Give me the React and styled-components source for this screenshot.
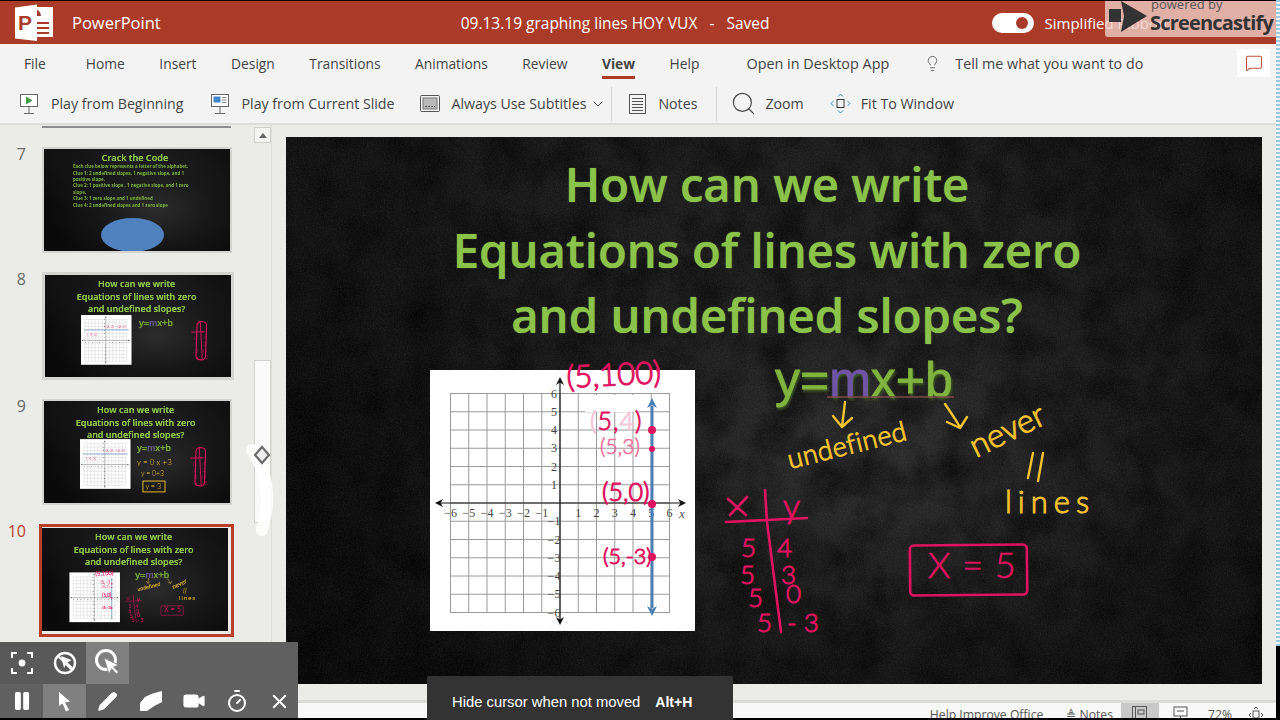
import React from "react";
import styled, { createGlobalStyle } from "styled-components";
import { ChevronDown, Lightbulb, MessageSquare, Search, X, Pause, Video, Pencil, Timer } from "lucide-react";

const RED = "#ab3b29";
const PINK = "#e0135f";
const YELLOW = "#f3c22f";
const GREEN = "#8bc34a";

const GlobalStyle = createGlobalStyle`
  html, body { margin: 0; padding: 0; background: #000; }
  * { box-sizing: border-box; }
  body { font-family: "Open Sans", "Liberation Sans", sans-serif; }
`;

const Page = styled.div`
  position: relative;
  width: 1280px;
  height: 720px;
  overflow: hidden;
  display: flex;
  flex-direction: column;
  padding: 0 4px 2px 0;
  background:
    linear-gradient(#000, #000) 0 646px / 100% 100% no-repeat,
    repeating-linear-gradient(#9cc8e2 0 2px, #eef6fa 2px 4px);
`;

/* title bar */
const TitleBar = styled.header`
  height: 44px;
  flex: none;
  position: relative;
  display: flex;
  align-items: center;
  background: ${RED};
  border-top: 1px solid #000;
  color: #fff;
  padding-left: 14px;
`;
const AppName = styled.span`
  font-size: 16.5px;
  margin-left: 18px;
`;
const DocTitle = styled.span`
  font-size: 15.5px;
  margin-left: 300px;
  white-space: pre;
`;
const Toggle = styled.span`
  width: 42px;
  height: 20px;
  border-radius: 10px;
  background: #fff;
  margin-left: 222px;
  display: flex;
  align-items: center;
  justify-content: flex-end;
  padding-right: 6px;
  &::after {
    content: "";
    width: 12px;
    height: 12px;
    border-radius: 50%;
    background: ${RED};
  }
`;
const RibbonSwitch = styled.span`
  font-size: 15px;
  margin-left: 11px;
  white-space: nowrap;
`;
const Watermark = styled.div`
  position: absolute;
  top: 0;
  left: 1105px;
  right: 0;
  height: 36px;
  background: rgba(238, 205, 197, 0.8);
  border-bottom-left-radius: 3px;
  overflow: hidden;
  color: #333;
`;
const PoweredBy = styled.span`
  position: absolute;
  left: 46px;
  top: -6px;
  font-size: 13px;
  color: #555;
`;
const CastName = styled.span`
  position: absolute;
  left: 45px;
  top: 8px;
  font-size: 20px;
  font-weight: 700;
  letter-spacing: -0.8px;
  color: #333;
`;
const CastLogo = styled.svg`
  position: absolute;
  left: 4px;
  top: 0;
`;

/* ribbon */
const Ribbon = styled.div`
  flex: none;
  height: 81px;
  background: #f3f3f3;
  border-bottom: 2px solid #dcdcd8;
  color: #444;
  font-size: 14.2px;
`;
const TabRow = styled.nav`
  height: 40px;
  display: flex;
  align-items: center;
  padding: 0 0 2px 24px;
  position: relative;
  font-size: 13.8px;
`;
const Tab = styled.span`
  position: relative;
  margin-right: ${(p) => p.$gap || 34.5}px;
  font-size: ${(p) => p.$size || 13.8}px;
  font-weight: ${(p) => (p.$active ? 700 : 400)};
  white-space: nowrap;
  ${(p) =>
    p.$active &&
    `&::after {
      content: "";
      position: absolute;
      left: 0;
      right: 0;
      bottom: -6px;
      height: 3px;
      background: ${RED};
    }`}
`;
const CommentBtn = styled.button`
  position: absolute;
  right: 6px;
  top: 5px;
  width: 33px;
  height: 28px;
  padding: 0;
  border: none;
  background: #fff;
  display: flex;
  align-items: center;
  justify-content: center;
  color: #c0503c;
`;
const ToolRow = styled.div`
  height: 39px;
  display: flex;
  align-items: center;
  padding-left: 19px;
`;
const Tool = styled.span`
  display: flex;
  align-items: center;
  gap: ${(p) => p.$iconGap || 12}px;
  margin-right: ${(p) => p.$gap ?? 26}px;
  white-space: nowrap;
`;
const TellMe = styled(Tool)`
  font-size: 14.3px;
`;
const TightChevron = styled(ChevronDown)`
  margin-left: -7px;
`;
const ToolDivider = styled.span`
  width: 1px;
  height: 34px;
  background: #d2d2d2;
  margin-right: ${(p) => p.$gap || 17}px;
`;

/* workspace */
const Workspace = styled.main`
  flex: 1;
  min-height: 0;
  display: flex;
  background: #ebebe7;
`;
const Sidebar = styled.aside`
  width: 272px;
  flex: none;
  display: flex;
  border-right: 1px solid #dededa;
`;
const ThumbList = styled.div`
  width: 254px;
  display: flex;
  flex-direction: column;
  gap: 19px;
  padding-top: 1px;
`;
const PrevEdge = styled.div`
  width: 189px;
  height: 2px;
  margin-left: 42px;
  background: #8c8c8c;
`;
const ThumbRow = styled.div`
  display: flex;
  align-items: flex-start;
`;
const ThumbNumber = styled.span`
  width: 26px;
  text-align: right;
  font-size: 16px;
  line-height: 14px;
  margin-right: ${(p) => (p.$active ? 13 : 16)}px;
  color: ${(p) => (p.$active ? "#b8402b" : "#6a6a6a")};
`;
const ThumbFrame = styled.div`
  border: ${(p) => (p.$active ? `3px solid #b93f2a` : `${p.$edge || 2}px solid #d3d3cf`)};
  padding: ${(p) => (p.$active ? "1px 3px 3px 0" : 0)};
  background: #ebebe7;
`;
const ThumbWindow = styled.div`
  width: 186px;
  height: ${(p) => p.$h || 102}px;
  overflow: hidden;
  background: #000;
`;
const ScrollBar = styled.div`
  width: 17px;
  display: flex;
  flex-direction: column;
  padding-top: 2px;
`;
const ScrollUp = styled.div`
  height: 16px;
  border: 1px solid #cfcfcb;
  background: #f4f4f2;
  display: flex;
  align-items: center;
  justify-content: center;
  &::after {
    content: "";
    border: 4px solid transparent;
    border-top: 0;
    border-bottom: 5px solid #666;
  }
`;
const ScrollThumb = styled.div`
  height: 163px;
  margin-top: 217px;
  background: #fafafa;
  border: 1px solid #d2d2ce;
`;
const Stage = styled.section`
  flex: 1;
  padding: 12px 0 0 14px;
`;

/* slide, drawn at full size and scaled down for the thumbnails */
const SlideCanvas = styled.div`
  position: relative;
  width: 976px;
  height: 547px;
  overflow: hidden;
  flex: none;
  transform-origin: 0 0;
  transform: scale(${(p) => p.$scale || 1});
  background:
    radial-gradient(ellipse 560px 340px at 60% 58%, #2c2c2c, rgba(30, 30, 30, 0.6) 55%, transparent 100%),
    radial-gradient(ellipse 700px 300px at 50% 10%, #1e1e1e, transparent 100%),
    #0a0a0a;
`;
const Grain = styled.svg`
  position: absolute;
  inset: 0;
`;
const SlideTitle = styled.div`
  position: relative;
  padding-top: 14px;
  margin-left: -14px;
  text-align: center;
  font-size: 47.3px;
  line-height: 65.5px;
  font-weight: 600;
  color: ${GREEN};
  text-shadow: 0 0 1px ${GREEN};
`;
const CrackTitle = styled(SlideTitle)`
  font-size: 48px;
  padding-top: 14px;
  margin-left: 0;
  line-height: 60px;
  text-indent: -22px;
`;
const CrackBody = styled.div`
  position: relative;
  margin: 0 0 0 152px;
  width: 680px;
  font-size: 23.5px;
  line-height: 34px;
  font-weight: 700;
  color: #7cb53f;
`;
const CrackShape = styled.div`
  position: absolute;
  left: 299px;
  top: 362px;
  width: 331px;
  height: 178px;
  border-radius: 50%;
  background: #4f81bd;
`;
const ChartCard = styled.svg`
  position: absolute;
  left: ${(p) => p.$left}px;
  top: ${(p) => p.$top}px;
  background: #fff;
  overflow: visible;
`;
const InkLayer = styled.svg`
  position: absolute;
  inset: 0;
  overflow: visible;
`;
const InkText = styled.text`
  font-family: "Lato", "Open Sans", sans-serif;
  font-weight: 300;
`;
const FormulaText = styled.text`
  font-family: "Liberation Sans", sans-serif;
  font-size: 50px;
  fill: #80b33f;
  stroke: #80b33f;
  stroke-width: 0.8px;
  filter: drop-shadow(1px 2px 1px #3f5a22);
`;
const AxisLabel = styled.text`
  font-family: "Liberation Serif", serif;
  font-size: 12px;
  fill: #444;
  text-anchor: middle;
`;

/* recorder overlay */
const Recorder = styled.div`
  position: absolute;
  left: 0;
  top: 642px;
  width: 298px;
  height: 76px;
  background: #606060;
  display: grid;
  grid-template-columns: repeat(7, 43px);
  grid-template-rows: 42px 34px;
`;
const RecCell = styled.span`
  display: flex;
  align-items: center;
  justify-content: center;
  color: #fff;
  background: ${(p) => (p.$on ? "#808080" : p.$dim ? "#595959" : "transparent")};
`;
const RecTooltip = styled.div`
  position: absolute;
  left: 427px;
  top: 676px;
  width: 306px;
  height: 44px;
  background: #333;
  border-radius: 2px 2px 0 0;
  color: #fff;
  font-family: "Liberation Sans", sans-serif;
  font-size: 14.8px;
  display: flex;
  align-items: center;
  padding: 7px 0 0 25px;
  white-space: nowrap;
`;
const Shortcut = styled.span`
  margin-left: 15px;
  font-weight: 700;
  font-size: 14px;
`;
const CursorTrail = styled.svg`
  position: absolute;
  left: 240px;
  top: 440px;
`;

/* status bar */
const StatusBar = styled.footer`
  flex: none;
  height: 18px;
  overflow: hidden;
  display: flex;
  justify-content: flex-end;
  align-items: stretch;
  background: #f8f8f8;
  border-top: 3px solid #dadad6;
  color: #555;
  font-size: 12.2px;
  padding-right: 12px;
  position: relative;
  margin-top: -2px;
`;
const StatusItem = styled.span`
  display: flex;
  align-items: flex-start;
  gap: 6px;
  padding-top: 3px;
  margin-right: ${(p) => p.$gap || 0}px;
  white-space: nowrap;
  line-height: 17px;
  ${(p) => p.$wide && `width: 38px; justify-content: center; background: #c9c9c9;`}
`;

const range = [-6, -5, -4, -3, -2, -1, 0, 1, 2, 3, 4, 5, 6];
const CELL = 18.25;
const ox = 130;
const oy = 133;

const ArrowHead = ({ x, y, dir, fill = "#111", s = 6 }) => {
  const pts = {
    l: `${x},${y} ${x + s * 2},${y - s} ${x + s * 1.4},${y} ${x + s * 2},${y + s}`,
    r: `${x},${y} ${x - s * 2},${y - s} ${x - s * 1.4},${y} ${x - s * 2},${y + s}`,
    u: `${x},${y} ${x - s},${y + s * 2} ${x},${y + s * 1.4} ${x + s},${y + s * 2}`,
    d: `${x},${y} ${x - s},${y - s * 2} ${x},${y - s * 1.4} ${x + s},${y - s * 2}`,
  };
  return <polygon points={pts[dir]} fill={fill} />;
};

// the coordinate grid pasted on the slides, line says which graph is on it
const Chart = ({ left, top, line }) => (
  <ChartCard $left={left} $top={top} width="265" height="261" viewBox="0 0 265 261">
    {range.map((n) => (
      <g key={n} stroke="#9a9a9a" strokeWidth="1">
        <line x1={ox + n * CELL} x2={ox + n * CELL} y1={oy - 6 * CELL} y2={oy + 6 * CELL} />
        <line y1={oy + n * CELL} y2={oy + n * CELL} x1={ox - 6 * CELL} x2={ox + 6 * CELL} />
      </g>
    ))}
    <line x1="10" x2="252" y1={oy} y2={oy} stroke="#111" strokeWidth="1.2" />
    <line x1={ox} x2={ox} y1="10" y2="252" stroke="#111" strokeWidth="1.2" />
    <ArrowHead x={5} y={oy} dir="l" s={4} />
    <ArrowHead x={256} y={oy} dir="r" s={4} />
    <ArrowHead x={ox} y={7} dir="u" s={4} />
    <ArrowHead x={ox} y={255} dir="d" s={4} />
    {range
      .filter((n) => n !== 0)
      .map((n) => (
        <g key={n}>
          <AxisLabel x={ox + n * CELL} y={oy + 14}>
            {n < 0 ? `\u2212${-n}` : n}
          </AxisLabel>
          <AxisLabel x={ox - 6} y={oy - n * CELL + 4}>
            {n < 0 ? `\u2212${-n}` : n}
          </AxisLabel>
        </g>
      ))}
    <AxisLabel x={252} y={oy + 15} fontStyle="italic">
      x
    </AxisLabel>
    {line === "vertical" && (
      <g>
        <line x1="222" x2="222" y1="36" y2="238" stroke="#4a7fb5" strokeWidth="3" />
        <ArrowHead x={222} y={28} dir="u" fill="#4a7fb5" s={5} />
        <ArrowHead x={222} y={246} dir="d" fill="#4a7fb5" s={5} />
        {[[60, 4], [79, 3], [134, 4], [187, 4]].map(([y, r]) => (
          <circle key={y} cx="222" cy={y} r={r} fill={PINK} />
        ))}
        <rect x="155" y="25" width="50" height="17" fill="#fff" />
        <InkText x="137" y="18" fontSize="31" fill={PINK} stroke={PINK} strokeWidth="1.1" transform="rotate(-3 137 18)">
          (5,100)
        </InkText>
        <circle cx="228" cy="0" r="2" fill={PINK} />
        <InkText x="160" y="60" fontSize="25" fill={PINK} stroke={PINK} strokeWidth="0.9" letterSpacing="1">
          <tspan fill="#f6c6d8" stroke="#f6c6d8">(</tspan>5,<tspan fill="#f6c6d8" stroke="#f6c6d8">4</tspan>)
        </InkText>
        <InkText x="170" y="84" fontSize="21" fill="#ee6f9c" stroke="#ee6f9c" strokeWidth="0.6">
          (5,3)
        </InkText>
        <InkText x="172" y="131" fontSize="25" fill={PINK} stroke={PINK} strokeWidth="1.1">
          (5,0)
        </InkText>
        <InkText x="173" y="194" fontSize="21.5" fill={PINK} stroke={PINK} strokeWidth="1">
          (5,-3)
        </InkText>
      </g>
    )}
    {line === "horizontal" && (
      <g>
        <line x1="14" x2="250" y1="78" y2="78" stroke="#4a7fb5" strokeWidth="3" />
        <InkText x="120" y="66" fontSize="24" fill={PINK}>(-2,3)</InkText>
        <InkText x="190" y="66" fontSize="24" fill={PINK}>(2,3)</InkText>
        <InkText x="30" y="108" fontSize="24" fill={PINK}>(-4,3)</InkText>
      </g>
    )}
  </ChartCard>
);

const Formula = ({ x, y }) => (
  <FormulaText x={x} y={y}>
    y=<tspan fill="#6f55a5" stroke="#6f55a5">m</tspan>x+b
  </FormulaText>
);

const Pen = ({ d, color, w = 2.4 }) => (
  <path d={d} fill="none" stroke={color} strokeWidth={w} strokeLinecap="round" strokeLinejoin="round" />
);

const PinkTable = () => (
  <g>
    <rect x="795" y="245" width="50" height="200" rx="20" fill="none" stroke={PINK} strokeWidth="6" transform="rotate(2 820 345)" />
    <Pen d="M770 300 L835 298 M815 250 L825 440" color={PINK} w="5" />
    {["4", "3", "0", "-3"].map((t, i) => (
      <InkText key={t} x="830" y={340 + i * 34} fontSize="30" fill={PINK}>
        {t}
      </InkText>
    ))}
    {[0, 1, 2, 3].map((i) => (
      <InkText key={i} x={780 + i * 4} y={340 + i * 34} fontSize="30" fill={PINK}>
        {i === 3 ? "x" : i}
      </InkText>
    ))}
  </g>
);

const MainInk = () => (
  <InkLayer width="976" height="547" viewBox="0 0 976 547">
    <Formula x={489} y={260} />
    <line x1="541" x2="668" y1="260" y2="260" stroke="#7d4a4a" strokeWidth="1.5" />
    <Pen d="M559 265 L556 290 M547 279 L556 290 L566 281" color={YELLOW} />
    <Pen d="M659 267 Q668 280 674 290 M661 285 L674 291 L681 280" color={YELLOW} />
    <InkText x="504" y="332" fontSize="27" letterSpacing="0.5" fill={YELLOW} stroke={YELLOW} strokeWidth="1" transform="rotate(-14 504 332)">
      undefined
    </InkText>
    <InkText x="690" y="321" fontSize="33" fill={YELLOW} stroke={YELLOW} strokeWidth="1" transform="rotate(-26 690 321)">
      never
    </InkText>
    <Pen d="M742 341 L747 316 M752 344 L757 316" color={YELLOW} />
    <InkText x="719" y="376" fontSize="31" letterSpacing="6" fill={YELLOW} stroke={YELLOW} strokeWidth="1">
      lines
    </InkText>
    {/* x / y table */}
    <Pen d="M461 360 L444 378 M442 362 L460 378" color={PINK} w="2.6" />
    <InkText x="497" y="381" fontSize="34" fill={PINK} stroke={PINK} strokeWidth="1">
      y
    </InkText>
    <Pen d="M440 385 L521 381" color={PINK} w="2.6" />
    <Pen d="M479 353 L481 385 L495 495" color={PINK} w="2.6" />
    {[
      [455, 420, "5"],
      [491, 420, "4"],
      [454, 447, "5"],
      [495, 447, "3"],
      [462, 470, "5"],
      [500, 466, "0"],
      [471, 495, "5"],
      [501, 495, "- 3"],
    ].map(([x, y, t]) => (
      <InkText key={`${x}-${y}`} x={x} y={y} fontSize="26" fill={PINK} stroke={PINK} strokeWidth="0.9">
        {t}
      </InkText>
    ))}
    <rect x="624" y="408" width="117" height="50" rx="4" fill="none" stroke={PINK} strokeWidth="2.6" transform="rotate(-0.5 680 430)" />
    <InkText x="642" y="441" fontSize="36" fill={PINK} stroke={PINK} strokeWidth="0.6" letterSpacing="1">
      X = 5
    </InkText>
  </InkLayer>
);

const SlideEightInk = () => (
  <InkLayer width="976" height="547" viewBox="0 0 976 547">
    <Formula x={493} y={265} />
    <PinkTable />
  </InkLayer>
);

const SlideNineInk = () => (
  <InkLayer width="976" height="547" viewBox="0 0 976 547">
    <Formula x={488} y={260} />
    <InkText x="488" y="335" fontSize="42" fill={YELLOW}>y = 0 x  +3</InkText>
    <InkText x="509" y="395" fontSize="36" fill={YELLOW}>y = 0+3</InkText>
    <rect x="519" y="420" width="116" height="57" fill="none" stroke={YELLOW} strokeWidth="5" />
    <InkText x="532" y="462" fontSize="38" fill={YELLOW}>y = 3</InkText>
    <PinkTable />
  </InkLayer>
);

const TitleBlock = () => (
  <SlideTitle>
    How can we write
    <br />
    Equations of lines with zero
    <br />
    and undefined slopes?
  </SlideTitle>
);

const MainSlideContent = () => (
  <>
    <TitleBlock />
    <Chart left={144} top={233} line="vertical" />
    <MainInk />
  </>
);

const clues = [
  "Each clue below represents a letter of the alphabet.",
  "Clue 1:  2 undefined slopes,  1 negative slope, and 1",
  "positive slope.",
  "Clue 2: 1 positive slope , 1 negative slope, and 1 zero",
  "slope.",
  "Clue 3: 1 zero slope and 1 undefined",
  "Clue 4: 2 undefined slopes and 1 zero slope",
];

const SCALE = 186 / 976;

const thumbs = [
  {
    n: 7,
    content: (
      <>
        <CrackTitle>Crack the Code</CrackTitle>
        <CrackBody>
          {clues.map((c) => (
            <div key={c}>{c}</div>
          ))}
        </CrackBody>
        <CrackShape />
      </>
    ),
  },
  {
    n: 8,
    edge: 3,
    content: (
      <>
        <TitleBlock />
        <Chart left={189} top={210} line="horizontal" />
        <SlideEightInk />
      </>
    ),
  },
  {
    n: 9,
    content: (
      <>
        <TitleBlock />
        <Chart left={189} top={200} line="horizontal" />
        <SlideNineInk />
      </>
    ),
  },
  { n: 10, active: true, h: 103, content: <MainSlideContent /> },
];

/* ribbon icons */
const ProjectorIcon = ({ kind }) => (
  <svg width="20" height="22" viewBox="0 0 20 22" fill="none">
    <rect x="1.5" y="1.5" width="17" height="12" fill="#fff" stroke="#666" />
    <path d="M10 13.5V20M5 20.5h10" stroke="#666" />
    {kind === "begin" ? (
      <path d="M7 3.5l6.5 4-6.5 4z" fill="#3f9b3f" />
    ) : (
      <>
        <rect x="3.5" y="3.5" width="7" height="6" fill="#3f86c8" />
        <path d="M12 4.5h4.5M12 7h4.5M12 9.5h4.5" stroke="#888" />
      </>
    )}
  </svg>
);
const SubtitleIcon = () => (
  <svg width="20" height="17" viewBox="0 0 20 17" fill="none">
    <rect x="0.5" y="0.5" width="19" height="16" rx="1" stroke="#555" />
    <rect x="3" y="3" width="14" height="11" fill="#b9b9b9" stroke="#777" />
    <path d="M5 11.5h10" stroke="#555" strokeDasharray="2 1" />
  </svg>
);
const NotesIcon = () => (
  <svg width="17" height="20" viewBox="0 0 17 20" fill="none" stroke="#555">
    <rect x="0.5" y="0.5" width="16" height="19" />
    <path d="M3 4.5h11M3 7.5h11M3 10.5h11M3 13.5h11M3 16.5h11" />
  </svg>
);
const FitIcon = () => (
  <svg width="21" height="21" viewBox="0 0 21 21" fill="none">
    <rect x="7" y="6.5" width="7" height="8" stroke="#3a3a3a" />
    <path d="M8 3.5l2.5-2.5 2.5 2.5M8 17.5l2.5 2.5 2.5-2.5M3.5 8L1 10.5 3.5 13M17.5 8l2.5 2.5-2.5 2.5" stroke="#2f86c8" />
  </svg>
);
const PowerPointLogo = () => (
  <svg width="40" height="37" viewBox="0 0 40 37">
    <rect x="16" y="3" width="23" height="30" fill="#fff" />
    <path d="M20 5v7h7a7 7 0 0 0-7-7z" fill={RED} />
    <path d="M20 18h15v2H20zM20 23h15v2H20zM20 28h15v2H20z" fill={RED} />
    <path d="M23 0.5L1 3.5v31l22 2.5z" fill="#fff" />
    <text x="4" y="26" fontFamily="Liberation Sans, sans-serif" fontSize="21" fontWeight="700" fill={RED}>
      P
    </text>
  </svg>
);

/* recorder icons, the top row has no match in the icon packages */
const FocusIcon = () => (
  <svg width="22" height="22" viewBox="0 0 22 22" fill="none" stroke="#fff" strokeWidth="2">
    <path d="M1 6V1h5M16 1h5v5M21 16v5h-5M6 21H1v-5" />
    <circle cx="11" cy="11" r="3.4" fill="#fff" stroke="none" />
  </svg>
);
const NoCursorIcon = () => (
  <svg width="24" height="24" viewBox="0 0 24 24" fill="none">
    <circle cx="12" cy="12" r="10" stroke="#fff" strokeWidth="2.4" />
    <path d="M8 5l3 12 2.5-4.5 4.5 5 1.5-1.5-5-4.5 4-2.5z" fill="#fff" />
    <path d="M5 5l14 14" stroke="#fff" strokeWidth="1.8" />
  </svg>
);
const HaloCursorIcon = () => (
  <svg width="28" height="30" viewBox="0 0 28 30" fill="none">
    <circle cx="12" cy="12" r="9.5" stroke="#fff" strokeWidth="3" />
    <path d="M10 10l5 16 2.5-5.5 5 5.5 2-2-5-5 5-2z" fill="#fff" stroke="#808080" strokeWidth="0.8" />
  </svg>
);
const ArrowIcon = () => (
  <svg width="18" height="22" viewBox="0 0 18 22">
    <path d="M3 2l11 9.5-5 1 4 7.5-3 1.5-3.5-8L3 16z" fill="#fff" />
  </svg>
);
const EraserIcon = () => (
  <svg width="24" height="22" viewBox="0 0 24 22">
    <path d="M6 7Q13 3 23 1v11Q16 15 8 21H1V13z" fill="#fff" />
  </svg>
);
const PagePresentIcon = () => (
  <svg width="15" height="17" viewBox="0 0 15 17" fill="none" stroke="#555">
    <rect x="1" y="1" width="13" height="9" />
    <path d="M4 5h7M7.5 10v5M4 15.5h7" />
  </svg>
);
const NormalViewIcon = () => (
  <svg width="15" height="17" viewBox="0 0 15 17" fill="none" stroke="#555">
    <rect x="0.5" y="0.5" width="14" height="16" />
    <path d="M3.5 0.5v16" />
    <rect x="6" y="4" width="6" height="4" />
  </svg>
);
const FitSmallIcon = () => (
  <svg width="16" height="17" viewBox="0 0 16 17" fill="none" stroke="#555">
    <rect x="5" y="5" width="6" height="7" />
    <path d="M6 3l2-2 2 2M3 7L1 9l2 2M13 7l2 2-2 2M6 14l2 2 2-2" />
  </svg>
);

const App = () => (
  <Page>
    <GlobalStyle />
    <TitleBar>
      <PowerPointLogo />
      <AppName>PowerPoint</AppName>
      <DocTitle>09.13.19 graphing lines HOY VUX   -   Saved</DocTitle>
      <Toggle />
      <RibbonSwitch>Simplified Ribbon</RibbonSwitch>
      <Watermark>
        <CastLogo width="40" height="32" viewBox="0 0 40 32">
          <rect x="0" y="8" width="12" height="13" fill="#333" />
          <path d="M12 0l26 15-26 16 3-16z" fill="#333" />
        </CastLogo>
        <PoweredBy>powered by</PoweredBy>
        <CastName>Screencastify</CastName>
      </Watermark>
    </TitleBar>

    <Ribbon>
      <TabRow>
        <Tab $gap={40}>File</Tab>
        <Tab>Home</Tab>
        <Tab>Insert</Tab>
        <Tab>Design</Tab>
        <Tab>Transitions</Tab>
        <Tab>Animations</Tab>
        <Tab>Review</Tab>
        <Tab $active>View</Tab>
        <Tab $gap={47}>Help</Tab>
        <Tab $gap={35} $size={14.4}>Open in Desktop App</Tab>
        <TellMe $iconGap={14}>
          <Lightbulb size={17} strokeWidth={1.2} color="#555" />
          Tell me what you want to do
        </TellMe>
        <CommentBtn>
          <MessageSquare size={18} strokeWidth={1.4} />
        </CommentBtn>
      </TabRow>
      <ToolRow>
        <Tool>
          <ProjectorIcon kind="begin" />
          Play from Beginning
        </Tool>
        <Tool>
          <ProjectorIcon kind="current" />
          Play from Current Slide
        </Tool>
        <Tool $gap={5} $iconGap={11}>
          <SubtitleIcon />
          Always Use Subtitles
          <TightChevron size={16} strokeWidth={1.4} />
        </Tool>
        <ToolDivider />
        <Tool $gap={19}>
          <NotesIcon />
          Notes
        </Tool>
        <ToolDivider $gap={13} />
        <Tool $iconGap={8}>
          <Search size={27} strokeWidth={1} color="#444" />
          Zoom
        </Tool>
        <Tool $iconGap={10}>
          <FitIcon />
          Fit To Window
        </Tool>
      </ToolRow>
    </Ribbon>

    <Workspace>
      <Sidebar>
        <ThumbList>
          <PrevEdge />
          {thumbs.map((t) => (
            <ThumbRow key={t.n}>
              <ThumbNumber $active={t.active}>{t.n}</ThumbNumber>
              <ThumbFrame $active={t.active} $edge={t.edge}>
                <ThumbWindow $h={t.h}>
                  <SlideCanvas $scale={SCALE}>{t.content}</SlideCanvas>
                </ThumbWindow>
              </ThumbFrame>
            </ThumbRow>
          ))}
        </ThumbList>
        <ScrollBar>
          <ScrollUp />
          <ScrollThumb />
        </ScrollBar>
      </Sidebar>
      <Stage>
        <SlideCanvas>
          <Grain width="976" height="547">
            <filter id="chalk">
              <feTurbulence type="fractalNoise" baseFrequency="0.7" numOctaves="3" seed="4" />
              <feColorMatrix values="0 0 0 0 1  0 0 0 0 1  0 0 0 0 1  0 0 0 0.32 -0.1" />
            </filter>
            <filter id="mottle">
              <feTurbulence type="fractalNoise" baseFrequency="0.025" numOctaves="4" seed="9" />
              <feColorMatrix values="0 0 0 0 0  0 0 0 0 0  0 0 0 0 0  0 0 0 1.6 -0.55" />
            </filter>
            <rect width="976" height="547" filter="url(#mottle)" opacity="0.7" />
            <rect width="976" height="547" filter="url(#chalk)" opacity="0.35" />
          </Grain>
          <MainSlideContent />
        </SlideCanvas>
      </Stage>
    </Workspace>

    <StatusBar>
      <StatusItem $gap={23}>Help Improve Office</StatusItem>
      <StatusItem $gap={8}>≜ Notes</StatusItem>
      <StatusItem $wide $gap={14}>
        <NormalViewIcon />
      </StatusItem>
      <StatusItem $gap={20}>
        <PagePresentIcon />
      </StatusItem>
      <StatusItem $gap={16}>72%</StatusItem>
      <StatusItem>
        <FitSmallIcon />
      </StatusItem>
    </StatusBar>

    <CursorTrail width="50" height="110" viewBox="0 0 50 110">
      <path d="M12 10Q36 45 22 90" fill="none" stroke="#fff" strokeWidth="12" strokeLinecap="round" opacity="0.88" />
      <path d="M22 7l7 8-7 8-7-8z" fill="#eee" stroke="#6b6b6b" strokeWidth="2.2" />
    </CursorTrail>

    <Recorder>
      <RecCell $dim><FocusIcon /></RecCell>
      <RecCell $dim><NoCursorIcon /></RecCell>
      <RecCell $on><HaloCursorIcon /></RecCell>
      <span /><span /><span /><span />
      <RecCell><Pause size={22} fill="#fff" stroke="#fff" strokeWidth={1.4} /></RecCell>
      <RecCell $on><ArrowIcon /></RecCell>
      <RecCell><Pencil size={21} fill="#fff" strokeWidth={1.2} /></RecCell>
      <RecCell><EraserIcon /></RecCell>
      <RecCell><Video size={24} fill="#fff" strokeWidth={1.2} /></RecCell>
      <RecCell><Timer size={24} strokeWidth={2} /></RecCell>
      <RecCell><X size={23} strokeWidth={2} /></RecCell>
    </Recorder>
    <RecTooltip>
      Hide cursor when not moved
      <Shortcut>Alt+H</Shortcut>
    </RecTooltip>
  </Page>
);

export default App;
